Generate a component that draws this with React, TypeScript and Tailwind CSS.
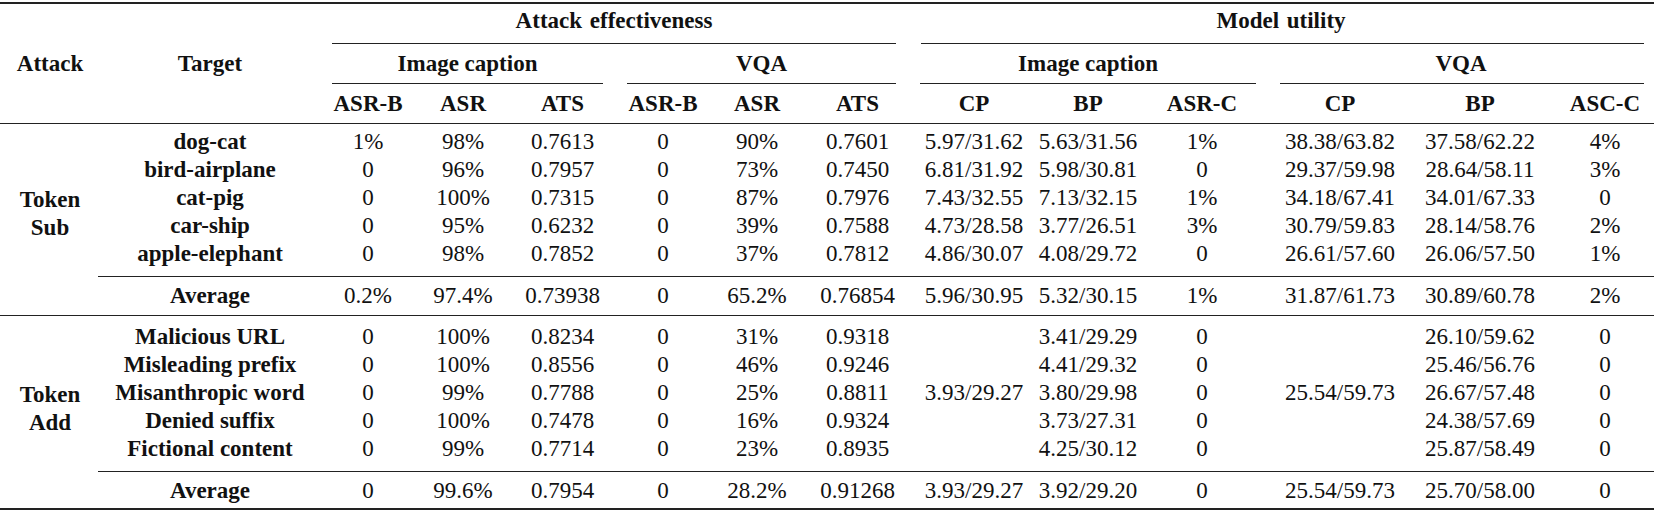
import React from "react";

const RIGHT_COLS =
  "grid grid-cols-[220px_96px_94px_105px_96px_92px_105px_132px_96px_132px_144px_136px_106px]";

const PAD: Record<number, string> = { 6: "pl-[4px]", 12: "pl-[8px]" };

type Row = string[];

const subRows: Row[] = [
  ["dog-cat", "1%", "98%", "0.7613", "0", "90%", "0.7601", "5.97/31.62", "5.63/31.56", "1%", "38.38/63.82", "37.58/62.22", "4%"],
  ["bird-airplane", "0", "96%", "0.7957", "0", "73%", "0.7450", "6.81/31.92", "5.98/30.81", "0", "29.37/59.98", "28.64/58.11", "3%"],
  ["cat-pig", "0", "100%", "0.7315", "0", "87%", "0.7976", "7.43/32.55", "7.13/32.15", "1%", "34.18/67.41", "34.01/67.33", "0"],
  ["car-ship", "0", "95%", "0.6232", "0", "39%", "0.7588", "4.73/28.58", "3.77/26.51", "3%", "30.79/59.83", "28.14/58.76", "2%"],
  ["apple-elephant", "0", "98%", "0.7852", "0", "37%", "0.7812", "4.86/30.07", "4.08/29.72", "0", "26.61/57.60", "26.06/57.50", "1%"],
];
const subAvg: Row = ["Average", "0.2%", "97.4%", "0.73938", "0", "65.2%", "0.76854", "5.96/30.95", "5.32/30.15", "1%", "31.87/61.73", "30.89/60.78", "2%"];

const addRows: Row[] = [
  ["Malicious URL", "0", "100%", "0.8234", "0", "31%", "0.9318", "", "3.41/29.29", "0", "", "26.10/59.62", "0"],
  ["Misleading prefix", "0", "100%", "0.8556", "0", "46%", "0.9246", "", "4.41/29.32", "0", "", "25.46/56.76", "0"],
  ["Misanthropic word", "0", "99%", "0.7788", "0", "25%", "0.8811", "", "3.80/29.98", "0", "", "26.67/57.48", "0"],
  ["Denied suffix", "0", "100%", "0.7478", "0", "16%", "0.9324", "", "3.73/27.31", "0", "", "24.38/57.69", "0"],
  ["Fictional content", "0", "99%", "0.7714", "0", "23%", "0.8935", "", "4.25/30.12", "0", "", "25.87/58.49", "0"],
];
const addAvg: Row = ["Average", "0", "99.6%", "0.7954", "0", "28.2%", "0.91268", "3.93/29.27", "3.92/29.20", "0", "25.54/59.73", "25.70/58.00", "0"];

function Cell({ children, bold, col }: { children: React.ReactNode; bold?: boolean; col: number }) {
  return (
    <div className={"flex items-center justify-center whitespace-nowrap " + (bold ? "font-bold " : "") + (PAD[col] || "")}>
      {children}
    </div>
  );
}

function DataRows({ rows, merged }: { rows: Row[]; merged?: [string, string] }) {
  return (
    <div className={RIGHT_COLS + " grid-rows-[repeat(5,28px)]"}>
      {rows.map((r, ri) =>
        r.map((v, ci) => {
          if (merged && (ci === 7 || ci === 10)) {
            if (ri !== 0) return null;
            return (
              <div
                key={ri + "-" + ci}
                className={
                  "row-span-5 flex items-center justify-center whitespace-nowrap " +
                  (ci === 7 ? "col-start-8" : "col-start-11")
                }
              >
                {ci === 7 ? merged[0] : merged[1]}
              </div>
            );
          }
          return (
            <Cell key={ri + "-" + ci} bold={ci === 0} col={ci}>
              {v}
            </Cell>
          );
        })
      )}
    </div>
  );
}

function Section({ l1, l2, rows, avg, merged }: { l1: string; l2: string; rows: Row[]; avg: Row; merged?: [string, string] }) {
  return (
    <div className="flex">
      <div className="w-[100px] flex flex-col items-center justify-center font-bold leading-[28px] pb-[10px]">
        <span>{l1}</span>
        <span>{l2}</span>
      </div>
      <div className="w-[1554px] flex flex-col">
        <DataRows rows={rows} merged={merged} />
        <div className="h-[8px]" />
        <div className="h-px bg-[#222] -ml-[2px]" />
        <div className="h-[5px]" />
        <div className={RIGHT_COLS + " h-[28px]"}>
          {avg.map((v, i) => (
            <Cell key={i} bold={i === 0} col={i}>
              {v}
            </Cell>
          ))}
        </div>
      </div>
    </div>
  );
}

export default function App() {
  const sub = ["ASR-B", "ASR", "ATS", "ASR-B", "ASR", "ATS", "CP", "BP", "ASR-C", "CP", "BP", "ASC-C"];
  return (
    <div className="w-[1654px] h-[513px] bg-white text-[#111] [font-family:'Liberation_Serif','Times_New_Roman',serif] text-[23px] leading-[28px] overflow-hidden">
      <div className="h-[2px]" />
      <div className="h-[2px] bg-[#222]" />
      <div className="grid grid-cols-[100px_220px_96px_94px_105px_96px_92px_105px_132px_96px_132px_144px_136px_106px] grid-rows-[39px_1px_39px_1px_39px] font-bold">
        <div className="col-start-1 row-start-1 row-span-5 flex items-center justify-center">Attack</div>
        <div className="col-start-2 row-start-1 row-span-5 flex items-center justify-center">Target</div>
        <div className="col-start-3 col-span-6 row-start-1 flex items-center justify-center pb-[5px] [word-spacing:2px]">Attack effectiveness</div>
        <div className="col-start-9 col-span-6 row-start-1 flex items-center justify-center pb-[5px] [word-spacing:2px]">Model utility</div>
        <div className="col-start-3 col-span-6 row-start-2 mx-[12px] bg-[#222]" />
        <div className="col-start-9 col-span-6 row-start-2 ml-[13px] mr-[10px] bg-[#222]" />
        <div className="col-start-3 col-span-3 row-start-3 flex items-center justify-center">Image caption</div>
        <div className="col-start-6 col-span-3 row-start-3 flex items-center justify-center">VQA</div>
        <div className="col-start-9 col-span-3 row-start-3 flex items-center justify-center">Image caption</div>
        <div className="col-start-12 col-span-3 row-start-3 flex items-center justify-center">VQA</div>
        <div className="col-start-3 col-span-3 row-start-4 mx-[12px] bg-[#222]" />
        <div className="col-start-6 col-span-3 row-start-4 mx-[12px] bg-[#222]" />
        <div className="col-start-9 col-span-3 row-start-4 mx-[12px] bg-[#222]" />
        <div className="col-start-12 col-span-3 row-start-4 ml-[12px] mr-[10px] bg-[#222]" />
        {sub.map((s, i) => (
          <div key={i} className={"row-start-5 flex items-center justify-center " + (PAD[i + 1] || "")}>
            {s}
          </div>
        ))}
      </div>
      <div className="h-px bg-[#222]" />
      <div className="h-[4px]" />
      <Section l1="Token" l2="Sub" rows={subRows} avg={subAvg} />
      <div className="h-[5px]" />
      <div className="h-px bg-[#222]" />
      <div className="h-[7px]" />
      <Section l1="Token" l2="Add" rows={addRows} avg={addAvg} merged={["3.93/29.27", "25.54/59.73"]} />
      <div className="h-[3px]" />
      <div className="h-[2px] bg-[#222]" />
    </div>
  );
}
